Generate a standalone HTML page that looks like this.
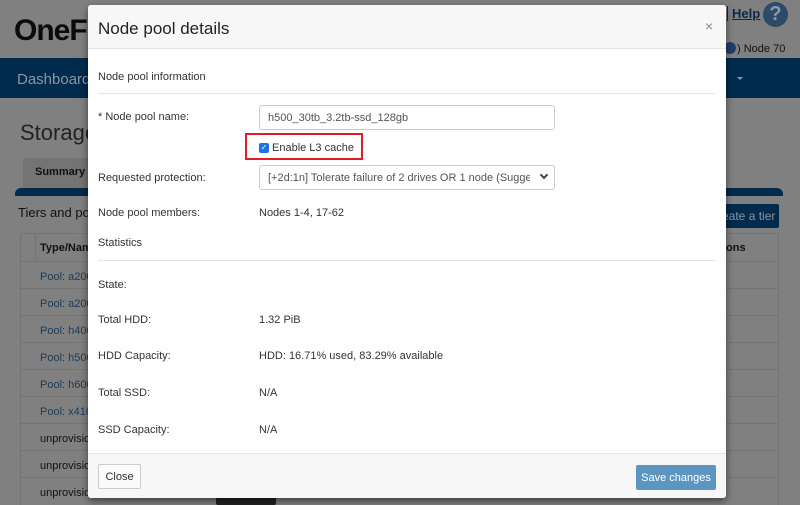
<!DOCTYPE html>
<html><head><meta charset="utf-8"><style>
*{box-sizing:border-box;margin:0;padding:0}
html,body{width:800px;height:505px;overflow:hidden}
body{background:#808080;font-family:"Liberation Sans","DejaVu Sans",sans-serif;position:relative}
.a{position:absolute}
.m{position:absolute;left:88px;top:5px;width:638px;height:493px;background:#fff;border-radius:3px;box-shadow:0 3px 8px rgba(0,0,0,.5);overflow:hidden}
.t{font-size:11px;color:#333;position:absolute}
.hr{position:absolute;left:10px;right:10px;height:1px;background:#e5e5e5}
.btn{display:flex;align-items:center;justify-content:center}
</style></head><body>
<div class="a" style="left:14px;top:14px;font:bold 30px 'Liberation Sans',sans-serif;color:#0a0a0a;letter-spacing:-1px">OneF</div>
<div class="a" style="left:727px;top:6px;font-size:13px;color:#0b2a4a"><span style="border-left:1px solid #222;padding-left:4px;text-decoration:underline;font-weight:bold">Help</span></div>
<div class="a" style="left:763px;top:2px;width:25px;height:25px;border-radius:50%;background:#2d4a68;color:#8a9cb0;font:bold 20px sans-serif;text-align:center;line-height:25px">?</div>
<div class="a" style="left:724px;top:42px;width:12px;height:12px;border-radius:50%;background:#1f3f66"></div>
<div class="a" style="left:737px;top:43px;font-size:11px;color:#111">) Node 70</div>
<div class="a" style="left:0;top:58px;width:800px;height:40px;background:#002b4c"></div>
<div class="a" style="left:17px;top:71px;font-size:15px;color:#8a96a3">Dashboard</div>
<div class="a" style="left:737px;top:77px;border:3px solid transparent;border-top-color:#8a96a3"></div>
<div class="a" style="left:20px;top:120px;font-size:22px;color:#222">Storage</div>
<div class="a" style="left:23px;top:158px;width:70px;height:30px;background:#747474;border-radius:3px 3px 0 0"></div>
<div class="a" style="left:35px;top:166px;font-size:11px;font-weight:bold;color:#111">Summary</div>
<div class="a" style="left:15px;top:188px;width:768px;height:8px;background:#002b4c;border-radius:6px 6px 0 0"></div>
<div class="a" style="left:18px;top:205px;font-size:13px;color:#111">Tiers and poo</div>
<div class="a" style="left:710px;top:204px;width:69px;height:24px;background:#002b4c;border-radius:2px;color:#8a96a3;font-size:12px;line-height:24px;padding-left:12px;white-space:nowrap">eate a tier</div>
<div class="a" style="left:20px;top:233px;width:759px;height:280px;border:1px solid #747474"></div>
<div class="a" style="left:35px;top:233px;width:1px;height:28px;background:#747474"></div>
<div class="a" style="left:40px;top:242px;font-size:11px;font-weight:bold;color:#111">Type/Nam</div>
<div class="a" style="left:726px;top:242px;font-size:11px;font-weight:bold;color:#111">ons</div>
<div class="a" style="left:20px;top:261px;width:759px;font-size:11px;color:#1c3a56">
<div style="height:27px;border-top:1px solid #747474;padding:9px 0 0 20px">Pool: a200</div>
<div style="height:27px;border-top:1px solid #747474;padding:9px 0 0 20px">Pool: a200</div>
<div style="height:27px;border-top:1px solid #747474;padding:9px 0 0 20px">Pool: h400</div>
<div style="height:27px;border-top:1px solid #747474;padding:9px 0 0 20px">Pool: h500</div>
<div style="height:27px;border-top:1px solid #747474;padding:9px 0 0 20px">Pool: h600</div>
<div style="height:27px;border-top:1px solid #747474;padding:9px 0 0 20px">Pool: x410</div>
<div style="height:27px;border-top:1px solid #747474;padding:9px 0 0 20px;color:#111">unprovisio</div>
<div style="height:27px;border-top:1px solid #747474;padding:9px 0 0 20px;color:#111">unprovisio</div>
<div style="height:27px;border-top:1px solid #747474;padding:9px 0 0 20px;color:#111">unprovisio</div>
</div>
<div class="a" style="left:216px;top:496px;width:60px;height:9px;background:#222;border-radius:2px"></div>
<div class="m">
<div class="a" style="left:0;top:0;width:638px;height:44px;background:#f7f7f7;border-bottom:1px solid #e5e5e5"></div>
<div class="a" style="left:10px;top:14px;font-size:17px;color:#222">Node pool details</div>
<div class="a" style="left:617px;top:13px;font-size:14px;color:#888">×</div>
<div class="t" style="left:10px;top:66px;font-size:11px">Node pool information</div>
<div class="hr" style="top:88px"></div>
<div class="t" style="left:10px;top:106px;font-size:11px">* Node pool name:</div>
<div class="a" style="left:171px;top:100px;width:296px;height:25px;border:1px solid #ccc;border-radius:3px;font-size:11px;color:#555;padding:6px 8px">h500_30tb_3.2tb-ssd_128gb</div>
<div class="a" style="left:157px;top:128px;width:118px;height:27px;border:2px solid #e01c24"></div>
<div class="a" style="left:171px;top:138px;width:10px;height:10px;background:#1a73e8;border-radius:2px;color:#fff;font-size:8px;line-height:10px;text-align:center">✓</div>
<div class="t" style="left:184px;top:137px;font-size:11px">Enable L3 cache</div>
<div class="t" style="left:10px;top:167px;font-size:11px">Requested protection:</div>
<div class="a" style="left:171px;top:160px;width:296px;height:25px;border:1px solid #ccc;border-radius:3px;font-size:11px;color:#555;padding:6px 24px 6px 8px;white-space:nowrap;overflow:hidden"><div style="overflow:hidden;width:262px">[+2d:1n] Tolerate failure of 2 drives OR 1 node (Suggested)</div></div>
<div class="a" style="left:453px;top:167px;width:6px;height:6px;border-right:2px solid #444;border-bottom:2px solid #444;transform:rotate(45deg)"></div>
<div class="t" style="left:10px;top:202px;font-size:11px">Node pool members:</div>
<div class="t" style="left:171px;top:202px;font-size:11px">Nodes 1-4, 17-62</div>
<div class="t" style="left:10px;top:232px;font-size:11px">Statistics</div>
<div class="hr" style="top:255px"></div>
<div class="t" style="left:10px;top:274px;font-size:11px">State:</div>
<div class="t" style="left:10px;top:309px;font-size:11px">Total HDD:</div>
<div class="t" style="left:171px;top:309px;font-size:11px">1.32 PiB</div>
<div class="t" style="left:10px;top:345px;font-size:11px">HDD Capacity:</div>
<div class="t" style="left:171px;top:345px;font-size:11px">HDD: 16.71% used, 83.29% available</div>
<div class="t" style="left:10px;top:382px;font-size:11px">Total SSD:</div>
<div class="t" style="left:171px;top:382px;font-size:11px">N/A</div>
<div class="t" style="left:10px;top:419px;font-size:11px">SSD Capacity:</div>
<div class="t" style="left:171px;top:419px;font-size:11px">N/A</div>
<div class="a" style="left:0;top:448px;width:638px;height:45px;background:#f7f7f7;border-top:1px solid #e5e5e5"></div>
<div class="a btn" style="left:10px;top:459px;width:43px;height:25px;border:1px solid #ccc;border-radius:2px;background:#fafafa;font-size:11px;color:#333">Close</div>
<div class="a btn" style="left:548px;top:460px;width:80px;height:25px;background:#5b95c0;border-radius:2px;font-size:11px;color:#fff">Save changes</div>
</div>
</body></html>
